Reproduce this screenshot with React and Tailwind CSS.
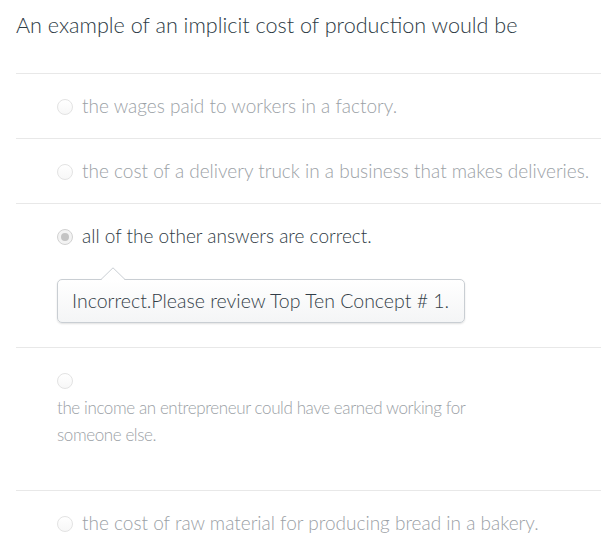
import React from "react";

const options = [
  { id: 1, text: "the wages paid to workers in a factory." },
  { id: 2, text: "the cost of a delivery truck in a business that makes deliveries." },
  {
    id: 3,
    text: "all of the other answers are correct.",
    selected: true,
    feedback: "Incorrect.Please review Top Ten Concept # 1.",
  },
  {
    id: 4,
    text: "the income an entrepreneur could have earned working for someone else.",
    block: true,
  },
  { id: 5, text: "the cost of raw material for producing bread in a bakery." },
];

const Radio = ({ checked }) => (
  <span
    className={
      "inline-block align-middle w-[16px] h-[16px] rounded-full border shrink-0 relative " +
      (checked
        ? "border-[#d2d2d2] bg-[#f3f3f3]"
        : "border-[#e3e3e3] bg-gradient-to-b from-white to-[#f7f7f7]")
    }
  >
    {checked && (
      <span className="absolute left-[3px] top-[3px] w-[8px] h-[8px] rounded-full bg-[#c4c4c4]" />
    )}
  </span>
);

const Option = ({ opt }) => (
  <div
    className={
      "border-t border-[#e8e8e8] pt-[19px] pl-[41px] " +
      (opt.feedback ? "pb-[24px]" : opt.block ? "pb-[42px]" : "pb-[18px]")
    }
  >
    {opt.block ? (
      <div className="leading-[27px]">
        <div className="h-[27px] flex items-center">
          <Radio />
        </div>
        <div className="max-w-[460px] text-[17px] tracking-[-0.4px] text-[#9ba1a6]">{opt.text}</div>
      </div>
    ) : (
      <div className="flex items-center h-[27px]">
        <Radio checked={opt.selected} />
        <span
          className={
            "ml-[9px] whitespace-nowrap " +
            (opt.selected ? "text-[#2f3b45]" : "text-[#9ba1a6]")
          }
        >
          {opt.text}
        </span>
      </div>
    )}
    {opt.feedback && (
      <div className="relative mt-[29px] w-[408px] h-[44px] rounded-[5px] border border-[#c9ced3] bg-gradient-to-b from-white to-[#f4f5f6] shadow-[0_1px_2px_rgba(0,0,0,0.12)] flex items-center pl-[14px] text-[19.5px] text-[#333e48]">
        <svg
          className="absolute left-[43px] top-[-13px]"
          width="24"
          height="13"
          viewBox="0 0 24 13"
        >
          <path d="M0 13 L12 1 L24 13 Z" fill="#ffffff" />
          <path d="M0 12.5 L12 0.8 L24 12.5" fill="none" stroke="#c9ced3" strokeWidth="1" />
        </svg>
        {opt.feedback}
      </div>
    )}
  </div>
);

export default function App() {
  return (
    <div
      className="bg-white w-[601px] h-[544px] overflow-hidden pl-[16px] font-light"
      style={{ fontFamily: "Lato, 'Open Sans', sans-serif" }}
    >
      <h1 className="text-[21.6px] text-[#2c3a44] leading-[26px] pt-[12px] pb-[35px] font-light">
        An example of an implicit cost of production would be
      </h1>
      <div className="text-[19px]">
        {options.map((opt) => (
          <Option key={opt.id} opt={opt} />
        ))}
      </div>
    </div>
  );
}
